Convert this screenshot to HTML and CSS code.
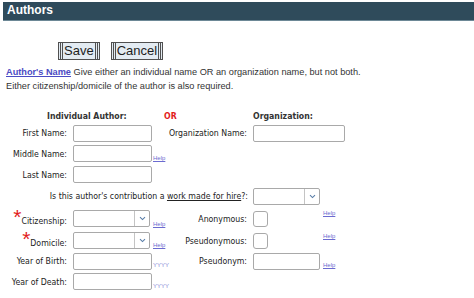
FILE: index.html
```html
<!DOCTYPE html>
<html lang="en">
<head>
    <meta charset="UTF-8">
    <title>Authors</title>
    <link rel="stylesheet" href="styles.css">
</head>
<body>
    <div class="section-bar">Authors</div>

    <div class="actions">
        <button class="btn">Save</button>
        <button class="btn">Cancel</button>
    </div>

    <p class="note"><a href="#" class="note-link">Author's Name</a> Give either an individual name OR an organization name, but not both.</p>
    <p class="note">Either citizenship/domicile of the author is also required.</p>

    <div class="author-form">
        <!-- headings -->
        <div class="col-head individual">Individual Author:</div>
        <div class="col-head or">OR</div>
        <div class="col-head org">Organization:</div>

        <!-- first name -->
        <label class="lbl">First Name:</label>
        <input class="field" type="text">
        <span></span>
        <label class="lbl">Organization Name:</label>
        <input class="field wide" type="text">
        <span></span>

        <!-- middle name -->
        <label class="lbl">Middle Name:</label>
        <input class="field" type="text">
        <a href="#" class="help">Help</a>
        <span></span><span></span><span></span>

        <!-- last name -->
        <label class="lbl">Last Name:</label>
        <input class="field" type="text">
        <span></span><span></span><span></span><span></span>

        <!-- work for hire -->
        <div class="hire-q">Is this author's contribution a <a href="#" class="plain-link">work made for hire</a>?:</div>
        <div class="select short"><span class="arrow"><svg width="7" height="5" viewBox="0 0 7 5"><path d="M1 1.2 L3.5 3.6 L6 1.2" fill="none" stroke="#5a7ea8" stroke-width="1.1"/></svg></span></div>
        <span></span>

        <!-- citizenship -->
        <label class="lbl required"><span class="req">*</span>Citizenship:</label>
        <div class="select"><span class="arrow"><svg width="7" height="5" viewBox="0 0 7 5"><path d="M1 1.2 L3.5 3.6 L6 1.2" fill="none" stroke="#5a7ea8" stroke-width="1.1"/></svg></span></div>
        <a href="#" class="help">Help</a>
        <label class="lbl">Anonymous:</label>
        <span class="check"></span>
        <a href="#" class="help top">Help</a>

        <!-- domicile -->
        <label class="lbl required"><span class="req">*</span>Domicile:</label>
        <div class="select"><span class="arrow"><svg width="7" height="5" viewBox="0 0 7 5"><path d="M1 1.2 L3.5 3.6 L6 1.2" fill="none" stroke="#5a7ea8" stroke-width="1.1"/></svg></span></div>
        <a href="#" class="help">Help</a>
        <label class="lbl">Pseudonymous:</label>
        <span class="check"></span>
        <a href="#" class="help top">Help</a>

        <!-- year of birth -->
        <label class="lbl">Year of Birth:</label>
        <input class="field" type="text">
        <span class="hint">YYYY</span>
        <label class="lbl">Pseudonym:</label>
        <input class="field short" type="text">
        <a href="#" class="help">Help</a>

        <!-- year of death -->
        <label class="lbl">Year of Death:</label>
        <input class="field" type="text">
        <span class="hint">YYYY</span>
        <span></span><span></span><span></span>
    </div>
</body>
</html>
```

FILE: styles.css
```css
* {
    margin: 0;
    padding: 0;
    box-sizing: border-box;
}

body {
    font-family: "Liberation Sans", Arial, sans-serif;
    background: #ffffff;
    color: #222;
}

.section-bar {
    margin: 2px 0 0 3px;
    height: 19px;
    background: #2f4b5b;
    border-bottom: 1px solid #6d8896;
    color: #ffffff;
    font-weight: bold;
    font-size: 12px;
    line-height: 17px;
    padding-left: 4px;
}

.actions {
    display: flex;
    gap: 11px;
    padding: 21px 0 0 58px;
    height: 39px;
}

.btn {
    height: 18px;
    padding: 0 5px;
    font-family: "Liberation Sans", Arial, sans-serif;
    font-size: 13px;
    line-height: 16px;
    color: #1e1e1e;
    background: #e3ebf2;
    border: 1px solid #505050;
    box-shadow:
        inset 1px 0 0 #e3ebf2, inset 2px 0 0 #505050, inset 3px 0 0 #e3ebf2, inset 4px 0 0 #505050,
        inset -1px 0 0 #e3ebf2, inset -2px 0 0 #505050, inset -3px 0 0 #e3ebf2, inset -4px 0 0 #505050;
}

.note {
    font-size: 9.2px;
    line-height: 14px;
    color: #333;
    padding-left: 6px;
    margin-top: 5px;
}

.note + .note {
    margin-top: 0;
}

.note-link {
    color: #4b4bc4;
    font-weight: bold;
}

.author-form {
    display: grid;
    grid-template-columns: 73px 80px 27px 73px 70px 60px;
    grid-template-rows: 14px 20px 21px 21px 22px 23px 21px 20px 21px;
    align-items: center;
    margin-top: 16px;
    font-family: "DejaVu Sans Condensed", "DejaVu Sans", sans-serif;
    font-size: 8.7px;
    color: #222;
}

.col-head {
    font-weight: bold;
    color: #333;
}

.individual {
    grid-column: 1 / 3;
    padding-left: 47px;
}

.or {
    color: #e21c1c;
    padding-left: 11px;
    grid-column: 3 / 5;
}

.org {
    grid-column: 5 / 7;
}

.lbl {
    justify-self: end;
    padding-right: 6px;
    white-space: nowrap;
}

.lbl.required {
    padding-top: 5px;
}

.req {
    color: #e21c1c;
    font-size: 21px;
    font-family: "Liberation Sans", Arial, sans-serif;
    position: relative;
    top: 0;
    line-height: 0;
}

.field {
    width: 79px;
    height: 17px;
    border: 1px solid #a9a9a9;
    border-radius: 2px;
    background: #fff;
}

.field.wide {
    width: 92px;
}

.field.short {
    width: 67px;
}

.select {
    width: 77px;
    height: 17px;
    border: 1px solid #a9a9a9;
    border-radius: 2px;
    display: flex;
    justify-content: flex-end;
}

.select.short {
    width: 67px;
}

.arrow {
    width: 15px;
    border-left: 1px solid #c4c4c4;
    display: flex;
    align-items: center;
    justify-content: center;
}

.check {
    width: 15px;
    height: 16px;
    border: 1px solid #a9a9a9;
    border-radius: 3px;
}

.help {
    align-self: end;
    margin-bottom: 3px;
    font-family: "Liberation Sans", Arial, sans-serif;
    font-size: 6px;
    color: #6b6bd0;
}

.help.top {
    align-self: start;
    margin: 3px 0 0;
}

.hint {
    align-self: end;
    margin-bottom: 3px;
    font-family: "Liberation Sans", Arial, sans-serif;
    font-size: 6px;
    color: #8a8ad6;
}

.hire-q {
    grid-column: 1 / 5;
    justify-self: end;
    padding-right: 5px;
    white-space: nowrap;
}

.plain-link {
    color: #222;
}
```
